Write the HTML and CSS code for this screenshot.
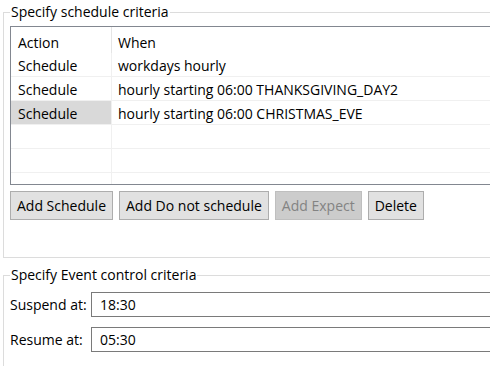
FILE: index.html
```html
<!DOCTYPE html>
<html lang="en">
<head>
  <meta charset="UTF-8" />
  <title>Schedule criteria</title>
  <link rel="stylesheet" href="styles.css">
</head>
<body>
  <fieldset class="group schedule-group">
    <legend>Specify schedule criteria</legend>
    <div class="table">
      <div class="row head">
        <div class="cell action">Action</div>
        <div class="cell when">When</div>
      </div>
      <div class="row">
        <div class="cell action">Schedule</div>
        <div class="cell when">workdays hourly</div>
      </div>
      <div class="row">
        <div class="cell action">Schedule</div>
        <div class="cell when">hourly starting 06:00 THANKSGIVING_DAY2</div>
      </div>
      <div class="row selected">
        <div class="cell action">Schedule</div>
        <div class="cell when">hourly starting 06:00 CHRISTMAS_EVE</div>
      </div>
      <div class="row"><div class="cell action"></div><div class="cell when"></div></div>
      <div class="row"><div class="cell action"></div><div class="cell when"></div></div>
      <div class="row"><div class="cell action"></div><div class="cell when"></div></div>
    </div>
    <div class="buttons">
      <button>Add Schedule</button>
      <button>Add Do not schedule</button>
      <button disabled>Add Expect</button>
      <button>Delete</button>
    </div>
  </fieldset>

  <fieldset class="group event-group">
    <legend>Specify Event control criteria</legend>
    <div class="field">
      <label for="suspend">Suspend at:</label>
      <input id="suspend" type="text" value="18:30">
    </div>
    <div class="field">
      <label for="resume">Resume at:</label>
      <input id="resume" type="text" value="05:30">
    </div>
  </fieldset>
</body>
</html>
```

FILE: styles.css
```css
body {
  font-family: 'Open Sans', 'Noto Sans', Arial, sans-serif;
  font-size: 14px;
  color: #000;
  background: #fff;
  margin: 0;
  padding: 3px 0 0 3px;
  overflow: hidden;
}
.group {
  width: 560px;
  margin: 0;
  border: 1px solid #dcdcdc;
  padding: 0 0 0 6px;
  box-sizing: border-box;
}
.group legend {
  padding: 0 1px;
  margin-left: 0;
  line-height: 18px;
}
.schedule-group {
  height: 255px;
  padding-top: 5px;
}
.table {
  border: 1px solid #828790;
  height: 159px;
  box-sizing: border-box;
  overflow: hidden;
}
.row {
  display: flex;
  height: 24px;
  border-bottom: 1px solid #f0f0f0;
  box-sizing: border-box;
}
.row.head {
  height: 26px;
  border-bottom: none;
}
.cell {
  line-height: 23px;
  padding-top: 1px;
  padding-left: 7px;
  white-space: nowrap;
  box-sizing: border-box;
}
.cell.action {
  width: 101px;
  border-right: 1px solid #f0f0f0;
}
.head .cell {
  line-height: 29px;
}
.head .cell.action {
  border-right-color: #e5e5e5;
}
.cell.when {
  padding-left: 6px;
}
.selected .cell.action {
  background: #d9d9d9;
}
.buttons {
  display: flex;
  gap: 6px;
  margin-top: 6px;
}
button {
  font: inherit;
  color: #000;
  height: 29px;
  padding: 0 6px;
  background: #e1e1e1;
  border: 1px solid #adadad;
  border-radius: 0;
}
button:disabled {
  background: #cccccc;
  border-color: #bfbfbf;
  color: #838383;
}
.event-group {
  margin-top: 8px;
  padding-top: 8px;
  padding-left: 6px;
  height: 130px;
}
.field {
  display: flex;
  align-items: center;
  margin-bottom: 10px;
}
.field label {
  width: 81px;
}
.field input {
  font: inherit;
  flex: 1;
  height: 25px;
  box-sizing: border-box;
  border: 1px solid #7a7a7a;
  padding: 0 8px;
  outline: none;
}
```
